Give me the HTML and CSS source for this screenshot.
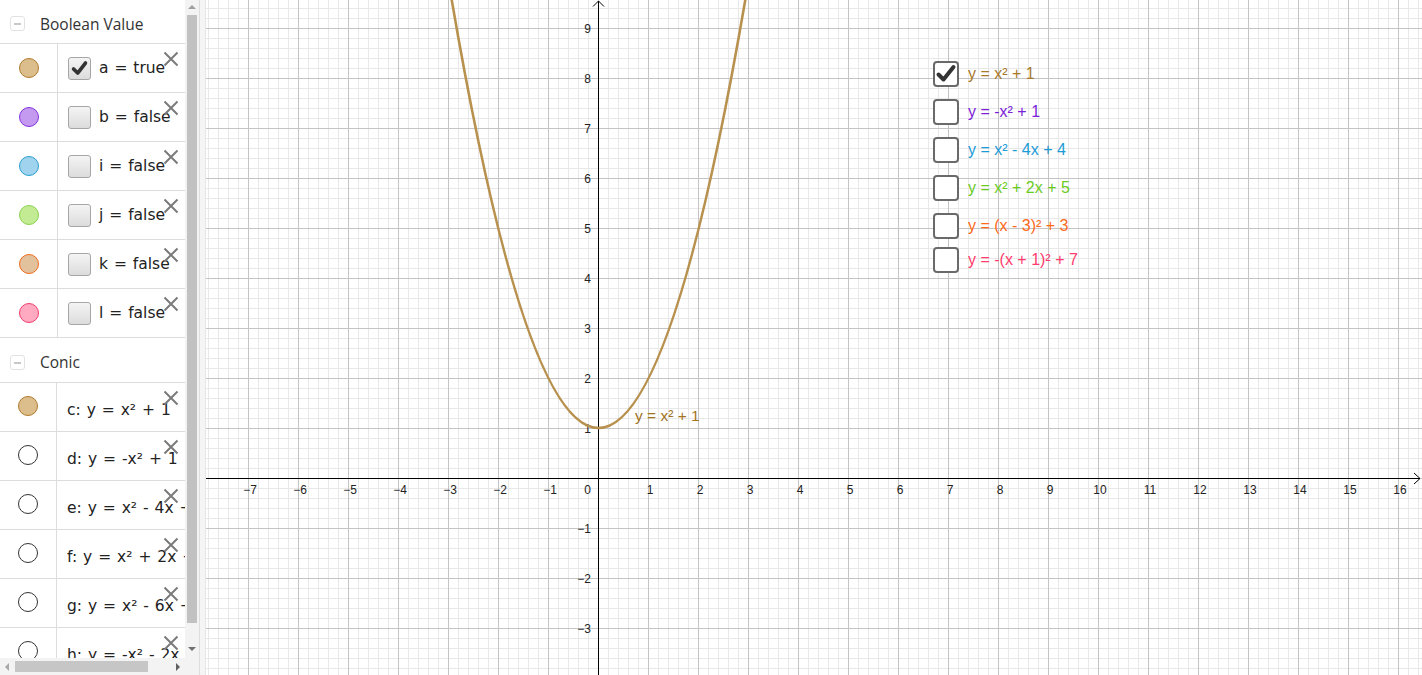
FILE: index.html
```html
<!DOCTYPE html>
<html lang="en">
<head>
<meta charset="utf-8">
<title>Boolean Value</title>
<link rel="stylesheet" href="styles.css">
</head>
<body>
<div class="app">
  <aside class="algebra">
    <div class="list">
      <div class="group-header"><span class="collapse"></span><span>Boolean Value</span></div>

      <div class="item">
        <div class="marker"><span class="dot dot-a"></span></div>
        <div class="content"><span class="cb checked"><svg viewBox="0 0 23 23"><path d="M5 12 L9.5 16.5 L18 5.5" /></svg></span><span class="formula">a = true</span></div>
        <span class="del"><svg viewBox="0 0 16 16"><path d="M1.5 1.5 L14.5 14.5 M14.5 1.5 L1.5 14.5"/></svg></span>
      </div>
      <div class="item">
        <div class="marker"><span class="dot dot-b"></span></div>
        <div class="content"><span class="cb"></span><span class="formula">b = false</span></div>
        <span class="del"><svg viewBox="0 0 16 16"><path d="M1.5 1.5 L14.5 14.5 M14.5 1.5 L1.5 14.5"/></svg></span>
      </div>
      <div class="item">
        <div class="marker"><span class="dot dot-i"></span></div>
        <div class="content"><span class="cb"></span><span class="formula">i = false</span></div>
        <span class="del"><svg viewBox="0 0 16 16"><path d="M1.5 1.5 L14.5 14.5 M14.5 1.5 L1.5 14.5"/></svg></span>
      </div>
      <div class="item">
        <div class="marker"><span class="dot dot-j"></span></div>
        <div class="content"><span class="cb"></span><span class="formula">j = false</span></div>
        <span class="del"><svg viewBox="0 0 16 16"><path d="M1.5 1.5 L14.5 14.5 M14.5 1.5 L1.5 14.5"/></svg></span>
      </div>
      <div class="item">
        <div class="marker"><span class="dot dot-k"></span></div>
        <div class="content"><span class="cb"></span><span class="formula">k = false</span></div>
        <span class="del"><svg viewBox="0 0 16 16"><path d="M1.5 1.5 L14.5 14.5 M14.5 1.5 L1.5 14.5"/></svg></span>
      </div>
      <div class="item">
        <div class="marker"><span class="dot dot-l"></span></div>
        <div class="content"><span class="cb"></span><span class="formula">l = false</span></div>
        <span class="del"><svg viewBox="0 0 16 16"><path d="M1.5 1.5 L14.5 14.5 M14.5 1.5 L1.5 14.5"/></svg></span>
      </div>

      <div class="group-header conic"><span class="collapse"></span><span>Conic</span></div>

      <div class="item conic-item">
        <div class="marker"><span class="dot dot-a"></span></div>
        <div class="content"><span class="formula">c: y = x² + 1</span></div>
        <span class="del"><svg viewBox="0 0 16 16"><path d="M1.5 1.5 L14.5 14.5 M14.5 1.5 L1.5 14.5"/></svg></span>
      </div>
      <div class="item conic-item">
        <div class="marker"><span class="dot dot-off"></span></div>
        <div class="content"><span class="formula">d: y = -x² + 1</span></div>
        <span class="del"><svg viewBox="0 0 16 16"><path d="M1.5 1.5 L14.5 14.5 M14.5 1.5 L1.5 14.5"/></svg></span>
      </div>
      <div class="item conic-item">
        <div class="marker"><span class="dot dot-off"></span></div>
        <div class="content"><span class="formula">e: y = x² - 4x + 4</span></div>
        <span class="del"><svg viewBox="0 0 16 16"><path d="M1.5 1.5 L14.5 14.5 M14.5 1.5 L1.5 14.5"/></svg></span>
      </div>
      <div class="item conic-item">
        <div class="marker"><span class="dot dot-off"></span></div>
        <div class="content"><span class="formula">f: y = x² + 2x + 5</span></div>
        <span class="del"><svg viewBox="0 0 16 16"><path d="M1.5 1.5 L14.5 14.5 M14.5 1.5 L1.5 14.5"/></svg></span>
      </div>
      <div class="item conic-item">
        <div class="marker"><span class="dot dot-off"></span></div>
        <div class="content"><span class="formula">g: y = x² - 6x + 12</span></div>
        <span class="del"><svg viewBox="0 0 16 16"><path d="M1.5 1.5 L14.5 14.5 M14.5 1.5 L1.5 14.5"/></svg></span>
      </div>
      <div class="item conic-item">
        <div class="marker"><span class="dot dot-off"></span></div>
        <div class="content"><span class="formula">h: y = -x² - 2x + 6</span></div>
        <span class="del"><svg viewBox="0 0 16 16"><path d="M1.5 1.5 L14.5 14.5 M14.5 1.5 L1.5 14.5"/></svg></span>
      </div>
    </div>

    <div class="vscroll">
      <span class="arrow-up"></span>
      <span class="vthumb"></span>
      <span class="arrow-down"></span>
    </div>
    <div class="hscroll">
      <span class="arrow-left"></span>
      <span class="hthumb"></span>
      <span class="arrow-right"></span>
    </div>
    <div class="corner"></div>
  </aside>

  <div class="splitter"></div>

  <main class="graphics">
    <svg class="canvas" width="1216" height="675" viewBox="206 0 1216 675">
      <defs>
        <pattern id="minor" x="8" y="8" width="10" height="10" patternUnits="userSpaceOnUse">
          <path d="M0.5 0 V10 M0 0.5 H10" stroke="#e8e8e8" stroke-width="1" fill="none"/>
        </pattern>
        <pattern id="major" x="48" y="28" width="50" height="50" patternUnits="userSpaceOnUse">
          <path d="M0.5 0 V50 M0 0.5 H50" stroke="#c4c4c4" stroke-width="1" fill="none"/>
        </pattern>
      </defs>
      <rect x="206" y="0" width="1216" height="675" fill="#ffffff"/>
      <rect x="206" y="0" width="1216" height="675" fill="url(#minor)"/>
      <rect x="206" y="0" width="1216" height="675" fill="url(#major)"/>

      <g stroke="#000" stroke-width="1" fill="none">
        <path d="M206 478.5 H1420"/>
        <path d="M1414 473 L1420 478.5 L1414 484"/>
        <path d="M598.5 675 V1"/>
        <path d="M593 6.5 L598.5 1 L604 6.5"/>
      </g>

      <g class="axis-labels" text-anchor="middle">
        <text x="250" y="494">−7</text>
        <text x="300" y="494">−6</text>
        <text x="350" y="494">−5</text>
        <text x="400" y="494">−4</text>
        <text x="450" y="494">−3</text>
        <text x="500" y="494">−2</text>
        <text x="550" y="494">−1</text>
        <text x="650" y="494">1</text>
        <text x="700" y="494">2</text>
        <text x="750" y="494">3</text>
        <text x="800" y="494">4</text>
        <text x="850" y="494">5</text>
        <text x="900" y="494">6</text>
        <text x="950" y="494">7</text>
        <text x="1000" y="494">8</text>
        <text x="1050" y="494">9</text>
        <text x="1100" y="494">10</text>
        <text x="1150" y="494">11</text>
        <text x="1200" y="494">12</text>
        <text x="1250" y="494">13</text>
        <text x="1300" y="494">14</text>
        <text x="1350" y="494">15</text>
        <text x="1400" y="494">16</text>
      </g>
      <g class="axis-labels" text-anchor="end">
        <text x="591" y="494">0</text>
        <text x="591" y="32.5">9</text>
        <text x="591" y="82.5">8</text>
        <text x="591" y="132.5">7</text>
        <text x="591" y="182.5">6</text>
        <text x="591" y="232.5">5</text>
        <text x="591" y="282.5">4</text>
        <text x="591" y="332.5">3</text>
        <text x="591" y="382.5">2</text>
        <text x="591" y="432.5">1</text>
        <text x="591" y="532.5">−1</text>
        <text x="591" y="582.5">−2</text>
        <text x="591" y="632.5">−3</text>
      </g>

      <path d="M448 -22 Q598.5 878 749 -22" stroke="#b8914f" stroke-width="2.6" fill="none"/>
      <text class="curve-label" x="635" y="421">y = x² + 1</text>
    </svg>

    <div class="checks">
      <div class="check-row"><span class="gcb"><svg viewBox="0 0 26 26"><path d="M5.5 13.5 L10.5 18.5 L20.5 6"/></svg></span><span class="glabel c1">y = x² + 1</span></div>
      <div class="check-row"><span class="gcb"></span><span class="glabel c2">y = -x² + 1</span></div>
      <div class="check-row"><span class="gcb"></span><span class="glabel c3">y = x² - 4x + 4</span></div>
      <div class="check-row"><span class="gcb"></span><span class="glabel c4">y = x² + 2x + 5</span></div>
      <div class="check-row"><span class="gcb"></span><span class="glabel c5">y = (x - 3)² + 3</span></div>
      <div class="check-row last"><span class="gcb"></span><span class="glabel c6">y = -(x + 1)² + 7</span></div>
    </div>
  </main>
</div>
</body>
</html>
```
FILE: styles.css
```css
html, body {
  margin: 0;
  padding: 0;
  overflow: hidden;
  background: #ffffff;
}

.app {
  display: flex;
  width: 1422px;
  height: 675px;
}

/* ---------- Algebra view ---------- */
.algebra {
  width: 199px;
  flex: none;
  display: grid;
  grid-template-columns: 185px 14px;
  grid-template-rows: 658px 17px;
  background: #ffffff;
}

.list {
  overflow: hidden;
  font-family: "DejaVu Sans", sans-serif;
  color: #222;
}

.group-header {
  height: 44px;
  box-sizing: border-box;
  border-bottom: 1px solid #dcdcdc;
  display: flex;
  align-items: center;
  gap: 15px;
  padding-left: 10px;
  padding-top: 4px;
  font-family: "Open Sans", "Liberation Sans", sans-serif;
  font-size: 15.5px;
  color: #333;
}

.group-header.conic {
  height: 45px;
}

.collapse {
  width: 15px;
  height: 15px;
  box-sizing: border-box;
  border: 1px solid #e2e2e2;
  border-radius: 3px;
  position: relative;
  flex: none;
}

.collapse::after {
  content: "";
  position: absolute;
  left: 3px;
  right: 3px;
  top: 6px;
  height: 2px;
  background: #c8c8c8;
}

.item {
  position: relative;
  height: 49px;
  box-sizing: border-box;
  border-bottom: 1px solid #dcdcdc;
  display: flex;
  overflow: hidden;
  white-space: nowrap;
}

.marker {
  width: 57px;
  flex: none;
  border-right: 1px solid #dcdcdc;
  display: flex;
  align-items: center;
  justify-content: center;
}

.conic-item .marker {
  padding-bottom: 2px;
  box-sizing: border-box;
}

.dot {
  width: 20px;
  height: 20px;
  box-sizing: border-box;
  border-radius: 50%;
  border: 1px solid #333;
}

.dot-a { background: #dcbd8c; border-color: #b07a2a; }
.dot-b { background: #c39af0; border-color: #8232de; }
.dot-i { background: #9fd3ee; border-color: #2b9fcf; }
.dot-j { background: #c3eb94; border-color: #88d24c; }
.dot-k { background: #e2c29c; border-color: #f06a1e; }
.dot-l { background: #ffaac0; border-color: #f03e6e; }
.dot-off { background: #ffffff; border-color: #333333; }

.content {
  display: flex;
  align-items: center;
  padding-left: 10px;
  font-size: 15.5px;
  word-spacing: 1px;
}

.conic-item .content {
  padding-top: 5px;
}

.cb {
  width: 23px;
  height: 23px;
  box-sizing: border-box;
  border: 1px solid #a6a6a6;
  border-radius: 3px;
  background: linear-gradient(#f4f4f4, #dcdcdc);
  margin-right: 8px;
  flex: none;
  display: flex;
}

.cb svg {
  width: 21px;
  height: 21px;
}

.cb svg path,
.gcb svg path {
  fill: none;
  stroke: #333;
  stroke-width: 4;
  stroke-linecap: round;
  stroke-linejoin: round;
}

.del {
  position: absolute;
  left: 163px;
  top: 7px;
  width: 16px;
  height: 16px;
}

.del svg {
  display: block;
  width: 16px;
  height: 16px;
}

.del svg path {
  stroke: #7a7a7a;
  stroke-width: 2;
  fill: none;
}

/* scrollbars */
.vscroll {
  background: #f3f3f3;
  display: flex;
  flex-direction: column;
  align-items: center;
}

.arrow-up {
  margin-top: 5px;
  width: 0;
  height: 0;
  border-left: 4px solid transparent;
  border-right: 4px solid transparent;
  border-bottom: 4px solid #a0a0a0;
}

.vthumb {
  margin-top: 6px;
  width: 10px;
  height: 608px;
  background: #c1c1c1;
}

.arrow-down {
  margin-top: 24px;
  width: 0;
  height: 0;
  border-left: 4px solid transparent;
  border-right: 4px solid transparent;
  border-top: 4px solid #707070;
}

.hscroll {
  background: #f3f3f3;
  display: flex;
  align-items: center;
}

.arrow-left {
  margin-left: 5px;
  width: 0;
  height: 0;
  border-top: 4px solid transparent;
  border-bottom: 4px solid transparent;
  border-right: 4px solid #a8a8a8;
}

.hthumb {
  margin-left: 6px;
  width: 133px;
  height: 11px;
  background: #c6c6c6;
}

.arrow-right {
  margin-left: 28px;
  width: 0;
  height: 0;
  border-top: 4px solid transparent;
  border-bottom: 4px solid transparent;
  border-left: 4px solid #606060;
}

.corner {
  background: #f3f3f3;
}

.splitter {
  width: 7px;
  flex: none;
  box-sizing: border-box;
  background: #f5f5f5;
  border-left: 1px solid #dddddd;
  border-right: 1px solid #e6e6e6;
}

/* ---------- Graphics view ---------- */
.graphics {
  flex: 1;
  position: relative;
  overflow: hidden;
}

.canvas {
  display: block;
}

.axis-labels text {
  font-family: "Liberation Sans", Arial, sans-serif;
  font-size: 12px;
  fill: #222;
}

.curve-label {
  font-family: "Liberation Sans", Arial, sans-serif;
  font-size: 15.5px;
  fill: #a3741f;
}

.checks {
  position: absolute;
  left: 727px;
  top: 61px;
  display: flex;
  flex-direction: column;
  gap: 12px;
}

.check-row {
  display: flex;
  align-items: center;
  gap: 9px;
  height: 26px;
}

.check-row.last {
  margin-top: -4px;
}

.gcb {
  width: 26px;
  height: 26px;
  box-sizing: border-box;
  border: 2px solid #6a6a6a;
  border-radius: 4px;
  background: #ffffff;
  display: flex;
  align-items: center;
  justify-content: center;
}

.gcb svg {
  width: 26px;
  height: 26px;
  flex: none;
}

.glabel {
  font-family: "Liberation Sans", Arial, sans-serif;
  font-size: 16px;
  white-space: nowrap;
}

.c1 { color: #a8792b; }
.c2 { color: #7b22d8; }
.c3 { color: #1c9bd7; }
.c4 { color: #6acb1f; }
.c5 { color: #ff6a1a; }
.c6 { color: #ff3c6d; }
```
